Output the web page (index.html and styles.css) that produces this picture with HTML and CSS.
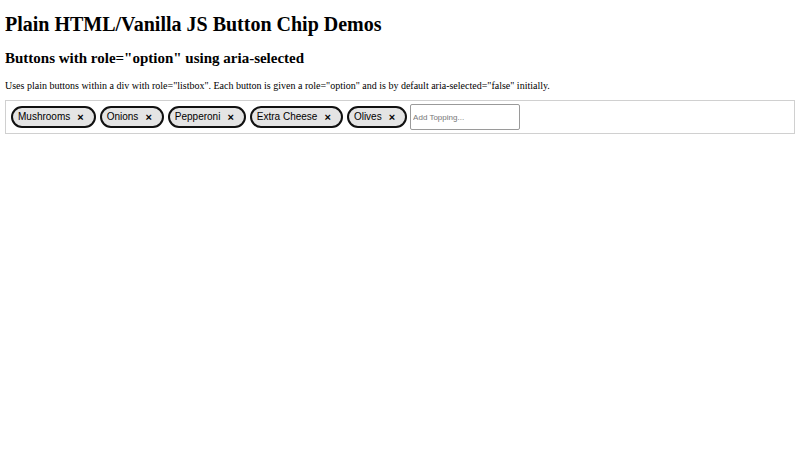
FILE: index.html
```html
<!DOCTYPE html>
<html lang="en">
<head>
    <meta charset="UTF-8">
    <meta name="viewport" content="width=device-width, initial-scale=1.0">
    <title>Button Chip Demos</title>
    <link rel="stylesheet" href="styles.css">
</head>
<body>
    <h1>Plain HTML/Vanilla JS Button Chip Demos</h1>
    <h2>Buttons with role="option" using aria-selected</h2>
    <p>Uses plain buttons within a div with role="listbox". Each button is given a role="option" and is by default aria-selected="false" initially.</p>
    <div class="chipList" role="listbox" aria-label="Toppings">
        <button class="chip" role="option" aria-selected="false">Mushrooms<span class="chipX" aria-hidden="true">&times;</span></button>
        <button class="chip" role="option" aria-selected="false">Onions<span class="chipX" aria-hidden="true">&times;</span></button>
        <button class="chip" role="option" aria-selected="false">Pepperoni<span class="chipX" aria-hidden="true">&times;</span></button>
        <button class="chip" role="option" aria-selected="false">Extra Cheese<span class="chipX" aria-hidden="true">&times;</span></button>
        <button class="chip" role="option" aria-selected="false">Olives<span class="chipX" aria-hidden="true">&times;</span></button>
        <input class="chipInput" type="text" placeholder="Add Topping...">
    </div>
</body>
</html>
```
FILE: styles.css
```css
body{
    margin: 5px;
    font-family: "Liberation Serif", serif;
    font-size: 10px;
    color: #000;
    background-color: #fff;
}
h1{
    margin: 8px 0 14px;
    font-size: 20px;
}
h2{
    margin: 0 0 13px;
    font-size: 15px;
}
p{
    margin: 0 0 9px;
    font-size: 10px;
}
.chipList{
    display: flex;
    align-items: center;
    gap: 4px;
    padding: 3px 5px;
    border: 1px solid #d0d0d0;
}
.chip{
    display: inline-flex;
    align-items: center;
    margin: 0;
    padding: 3px 5px;
    border: 2px solid #111;
    border-radius: 12px;
    background-color: #e4e4e4;
    font-family: "Liberation Sans", Arial, sans-serif;
    font-size: 10px;
    line-height: 12px;
    color: #000;
}
.chipX{
    margin-left: 2px;
    padding: 0 5px;
    font-weight: bold;
    font-size: 11px;
}
.chipInput{
    box-sizing: border-box;
    width: 110px;
    height: 26px;
    margin: 0 0 0 -1px;
    padding: 1px 2px;
    border: 1px solid #9a9a9a;
    border-radius: 2px;
    font-family: "Liberation Sans", Arial, sans-serif;
    font-size: 8px;
}
.chipInput::placeholder{
    color: #777;
}
```
